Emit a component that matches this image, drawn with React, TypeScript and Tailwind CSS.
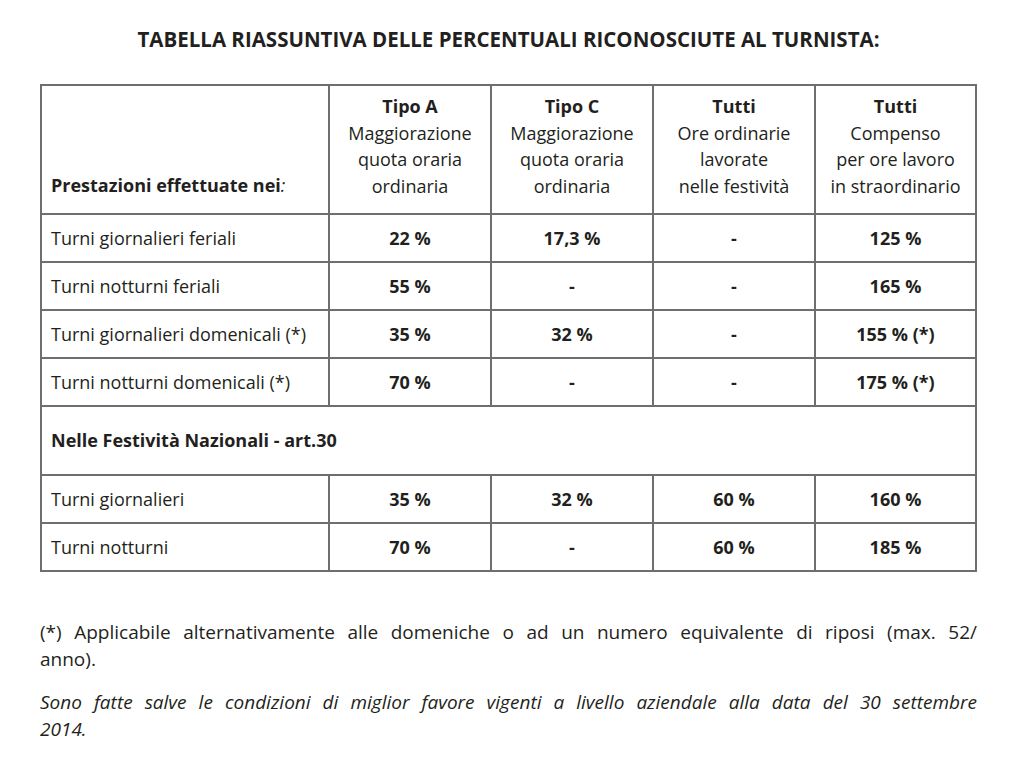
import React from "react";

const font = { fontFamily: '"Open Sans", "Noto Sans", sans-serif' };

type Row = { label: string; a: string; c: string; t: string; s: string };

const rows1: Row[] = [
  { label: "Turni giornalieri feriali", a: "22 %", c: "17,3 %", t: "-", s: "125 %" },
  { label: "Turni notturni feriali", a: "55 %", c: "-", t: "-", s: "165 %" },
  { label: "Turni giornalieri domenicali (*)", a: "35 %", c: "32 %", t: "-", s: "155 % (*)" },
  { label: "Turni notturni domenicali (*)", a: "70 %", c: "-", t: "-", s: "175 % (*)" },
];
const rows2: Row[] = [
  { label: "Turni giornalieri", a: "35 %", c: "32 %", t: "60 %", s: "160 %" },
  { label: "Turni notturni", a: "70 %", c: "-", t: "60 %", s: "185 %" },
];

function DataRow({ r }: { r: Row }) {
  return (
    <>
      <div className="bg-white h-[46px] flex items-center pl-[9px] text-[18px]">{r.label}</div>
      {[r.a, r.c, r.t, r.s].map((v, i) => (
        <div key={i} className="bg-white h-[46px] flex items-center justify-center text-[18px] font-bold">
          {v}
        </div>
      ))}
    </>
  );
}

function Head({ title, lines }: { title: string; lines: string[] }) {
  return (
    <div className="bg-white h-[127px] flex flex-col items-center justify-center pb-[7px] text-center text-[18px] leading-[26.5px]">
      <div className="font-bold">{title}</div>
      {lines.map((l) => (
        <div key={l}>{l}</div>
      ))}
    </div>
  );
}

export default function App() {
  return (
    <div className="w-[1024px] h-[772px] bg-white text-[#231f20]" style={font}>
      <div className="ml-[40px] w-[937px]">
        <div className="pt-[25px] h-[84px] text-center font-bold text-[20.5px] leading-[28px]">
          TABELLA RIASSUNTIVA DELLE PERCENTUALI RICONOSCIUTE AL TURNISTA:
        </div>
        <div className="grid grid-cols-[286px_160px_160px_160px_159px] gap-[2px] p-[2px] bg-[#6e6e6e]">
          <div className="bg-white h-[127px] flex items-end pl-[9px] pb-[14px] text-[18px] font-bold">
            Prestazioni effettuate nei<span className="italic font-normal">:</span>
          </div>
          <Head title="Tipo A" lines={["Maggiorazione", "quota oraria", "ordinaria"]} />
          <Head title="Tipo C" lines={["Maggiorazione", "quota oraria", "ordinaria"]} />
          <Head title="Tutti" lines={["Ore ordinarie", "lavorate", "nelle festività"]} />
          <Head title="Tutti" lines={["Compenso", "per ore lavoro", "in straordinario"]} />
          {rows1.map((r) => (
            <DataRow key={r.label} r={r} />
          ))}
          <div className="col-span-5 bg-white h-[67px] flex items-center pl-[9px] text-[18px] font-bold">
            Nelle Festività Nazionali - art.30
          </div>
          {rows2.map((r) => (
            <DataRow key={r.label} r={r} />
          ))}
        </div>
        <div className="mt-[47px] text-[19px] leading-[27px]">
          <div className="text-justify [text-align-last:justify]">
            (*) Applicabile alternativamente alle domeniche o ad un numero equivalente di riposi (max. 52/
          </div>
          <div>anno).</div>
          <div className="mt-[16px] italic text-justify [text-align-last:justify]">
            Sono fatte salve le condizioni di miglior favore vigenti a livello aziendale alla data del 30 settembre
          </div>
          <div className="italic">2014.</div>
        </div>
      </div>
    </div>
  );
}
